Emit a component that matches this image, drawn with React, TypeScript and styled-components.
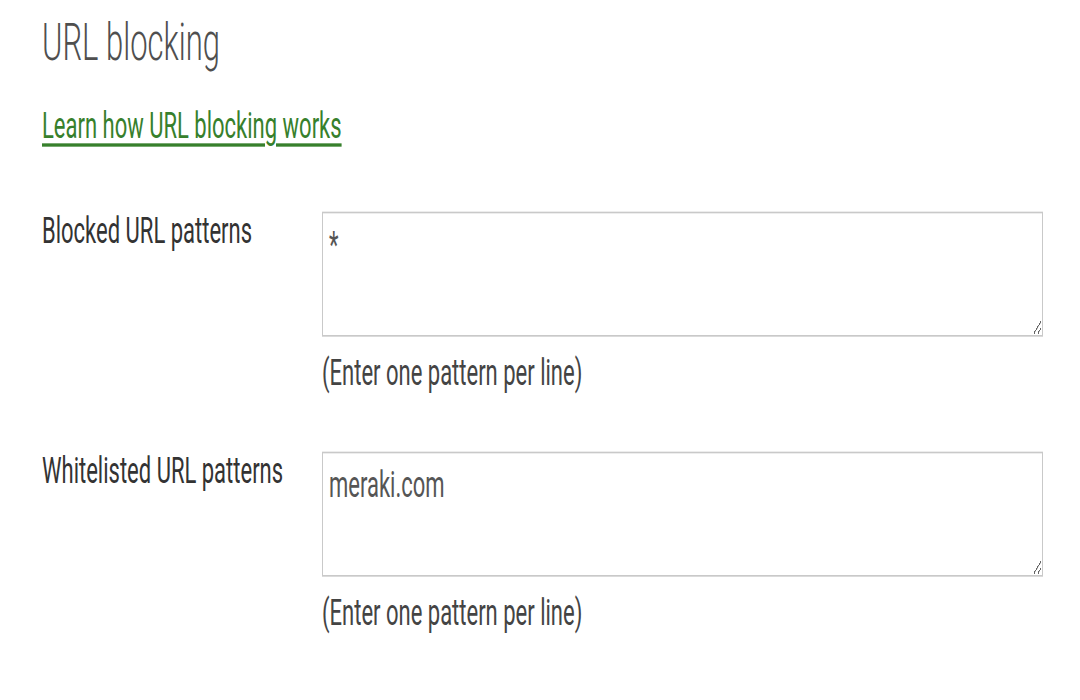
import React from "react";
import styled, { createGlobalStyle } from "styled-components";

const GlobalStyle = createGlobalStyle`
  html, body {
    margin: 0;
    padding: 0;
    background: #ffffff;
  }
  body {
    font-family: Roboto, "Liberation Sans", Arial, sans-serif;
  }
`;

/* Frame reserves the full window so the stretched page is not clipped. */
const Frame = styled.div`
  width: 1080px;
  height: 700px;
  overflow: hidden;
`;

/* The reference is rendered with a vertical stretch; the whole page is laid
   out normally and stretched once at the root. */
const Page = styled.div`
  height: 420px;
  transform: scaleY(1.6667);
  transform-origin: 0 0;
  padding: 10px 0 0 42px;
  box-sizing: border-box;
  font-family: Roboto, "Liberation Sans", Arial, sans-serif;
`;

const Title = styled.h1`
  margin: 0;
  font-size: 31px;
  line-height: 1;
  font-weight: 300;
  color: #4f4f4f;
`;

const LearnLink = styled.a`
  display: inline-block;
  margin-top: 24px;
  font-size: 22px;
  line-height: 1;
  color: #37802c;
  text-decoration: underline;
  text-decoration-thickness: 1.5px;
  text-underline-offset: 3px;
  cursor: pointer;
`;

const Form = styled.div`
  margin-top: 40px;
  display: flex;
  flex-direction: column;
  gap: 36px;
`;

const Row = styled.div`
  display: grid;
  grid-template-columns: 280px 721px;
  align-items: start;
`;

const Label = styled.label`
  padding-top: 1px;
  font-size: 22px;
  line-height: 1;
  color: #333333;
`;

const Field = styled.div`
  display: flex;
  flex-direction: column;
`;

const Area = styled.textarea`
  display: block;
  box-sizing: border-box;
  width: 721px;
  height: 75px;
  margin: 0;
  padding: 6px;
  border: 1px solid #c9c9c9;
  border-radius: 0;
  font-family: Roboto, "Liberation Sans", Arial, sans-serif;
  font-size: 22px;
  line-height: 1.2;
  color: #555555;
  background: #ffffff;
  outline: none;
`;

const Hint = styled.div`
  margin-top: 11px;
  font-size: 22px;
  line-height: 1;
  color: #444444;
`;

const rows = [
  { id: "blocked", label: "Blocked URL patterns", value: "*" },
  { id: "whitelisted", label: "Whitelisted URL patterns", value: "meraki.com" },
];

export default function App() {
  return (
    <>
      <GlobalStyle />
      <Frame>
        <Page>
          <Title>URL blocking</Title>
          <LearnLink>Learn how URL blocking works</LearnLink>
          <Form>
            {rows.map((r) => (
              <Row key={r.id}>
                <Label htmlFor={r.id}>{r.label}</Label>
                <Field>
                  <Area id={r.id} defaultValue={r.value} spellCheck={false} />
                  <Hint>(Enter one pattern per line)</Hint>
                </Field>
              </Row>
            ))}
          </Form>
        </Page>
      </Frame>
    </>
  );
}
